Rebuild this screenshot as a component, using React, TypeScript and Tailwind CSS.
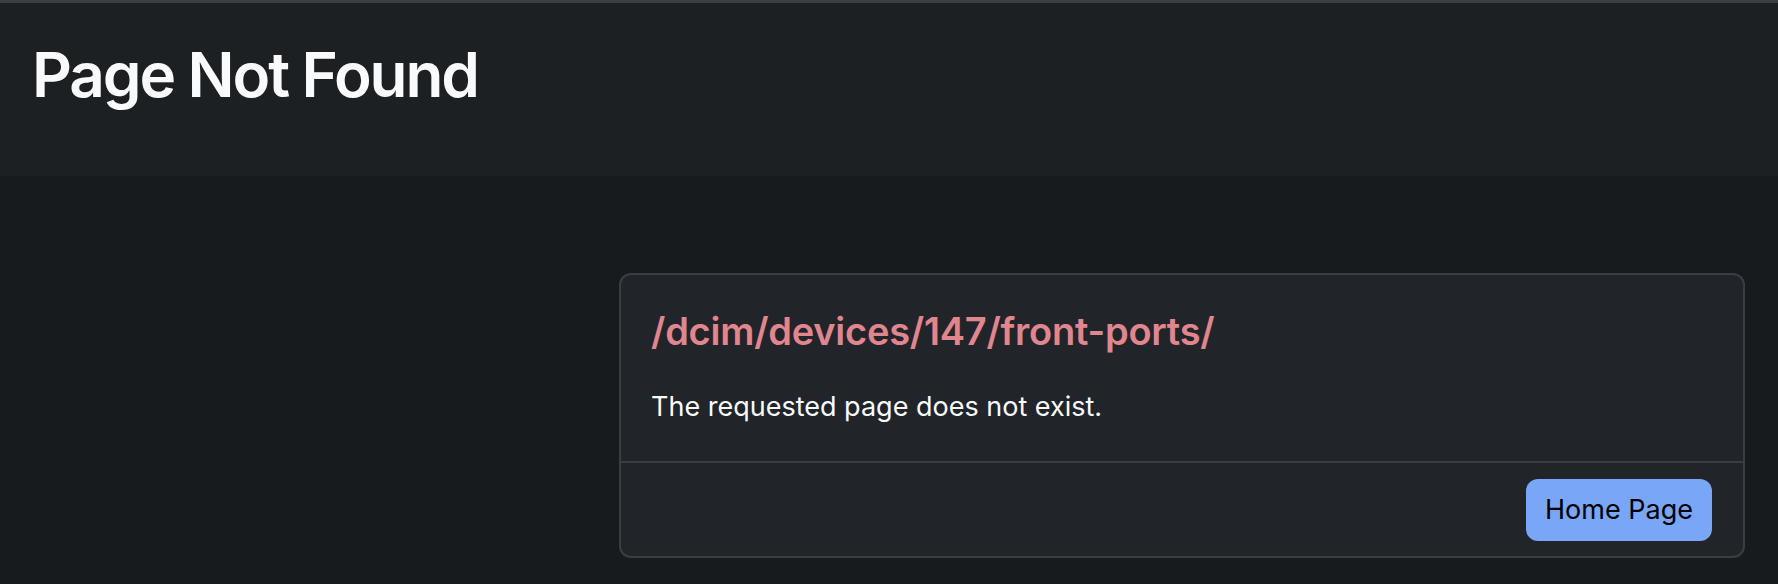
export default function App() {
  return (
    <div
      className="min-h-[584px] w-full bg-[#181b1e] border-t-[3px] border-[#3b3e43]"
      style={{ fontFamily: 'Inter, "Noto Sans", "Liberation Sans", sans-serif' }}
    >
      <header className="h-[173px] bg-[#1d2023] px-[32px] pt-[34px]">
        <h1 className="text-[62px] leading-[76px] font-semibold text-[#f8fafc] tracking-[-2.1px]">
          Page Not Found
        </h1>
      </header>
      <main className="flex justify-end px-[33px] pt-[97px] pb-[26px]">
        <div className="w-[1126px] rounded-[12px] border-2 border-[#3a3d42] bg-[#212428]">
          <div className="px-[30px] pt-[33px] pb-[34px]">
            <h3 className="text-[38px] leading-[46px] font-semibold text-[#e0868f] tracking-[-0.25px] mb-[33px]">
              /dcim/devices/147/front-ports/
            </h3>
            <p className="text-[27px] leading-[40px] text-[#f8fafc]">
              The requested page does not exist.
            </p>
          </div>
          <div className="flex justify-end border-t-2 border-[#3a3d42] px-[31px] pt-[16px] pb-[15px]">
            <button className="h-[62px] rounded-[12px] bg-[#79a6f6] px-[19px] text-[27px] leading-[40px] text-black">
              Home Page
            </button>
          </div>
        </div>
      </main>
    </div>
  );
}
